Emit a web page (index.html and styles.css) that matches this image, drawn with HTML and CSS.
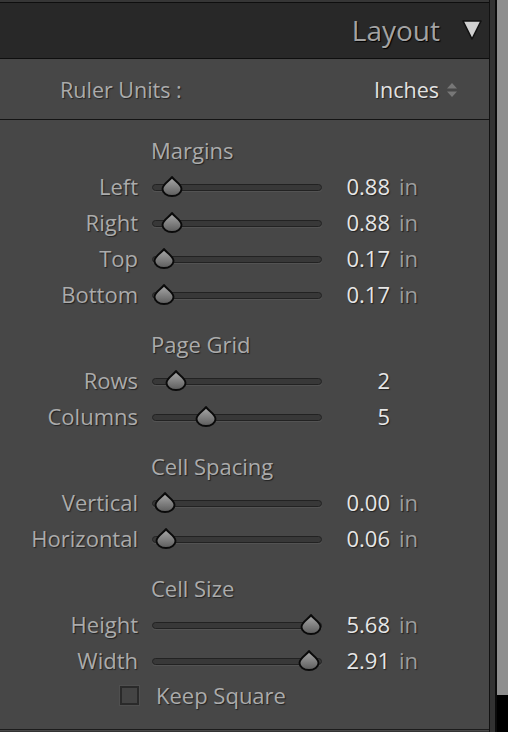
FILE: index.html
```html
<!DOCTYPE html>
<html>
<head>
<meta charset="utf-8">
<link rel="stylesheet" href="styles.css">
</head>
<body>
<div class="frame">
  <div class="panel">
    <div class="topstrip"></div>
    <div class="header">
      <span class="title">Layout</span>
      <svg class="tri" width="22" height="22" viewBox="0 0 22 22"><path d="M2 2 L20 2 L11 20 Z" fill="#cfcfcf" stroke="#111" stroke-width="1.6" stroke-linejoin="round"/></svg>
    </div>
    <div class="ruler">
      <span class="rlabel">Ruler Units :</span>
      <span class="rvalue">Inches</span>
      <svg class="spin" width="12" height="16" viewBox="0 0 12 16"><path d="M1 6.5 L6 1 L11 6.5 Z" fill="#777"/><path d="M1 9.5 L6 15 L11 9.5 Z" fill="#777"/></svg>
    </div>
    <div class="body">
      <div class="section">
        <div class="heading">Margins</div>
        <div class="row"><span class="label">Left</span><span class="slider"><span class="track"></span><svg class="knob" style="left:9px" width="22" height="21" viewBox="0 0 22 21"><use href="#knob"/></svg></span><span class="value">0.88</span><span class="unit">in</span></div>
        <div class="row"><span class="label">Right</span><span class="slider"><span class="track"></span><svg class="knob" style="left:9px" width="22" height="21" viewBox="0 0 22 21"><use href="#knob"/></svg></span><span class="value">0.88</span><span class="unit">in</span></div>
        <div class="row"><span class="label">Top</span><span class="slider"><span class="track"></span><svg class="knob" style="left:1px" width="22" height="21" viewBox="0 0 22 21"><use href="#knob"/></svg></span><span class="value">0.17</span><span class="unit">in</span></div>
        <div class="row"><span class="label">Bottom</span><span class="slider"><span class="track"></span><svg class="knob" style="left:1px" width="22" height="21" viewBox="0 0 22 21"><use href="#knob"/></svg></span><span class="value">0.17</span><span class="unit">in</span></div>
      </div>
      <div class="section">
        <div class="heading">Page Grid</div>
        <div class="row"><span class="label">Rows</span><span class="slider"><span class="track"></span><svg class="knob" style="left:13px" width="22" height="21" viewBox="0 0 22 21"><use href="#knob"/></svg></span><span class="value">2</span><span class="unit"></span></div>
        <div class="row"><span class="label">Columns</span><span class="slider"><span class="track"></span><svg class="knob" style="left:43px" width="22" height="21" viewBox="0 0 22 21"><use href="#knob"/></svg></span><span class="value">5</span><span class="unit"></span></div>
      </div>
      <div class="section">
        <div class="heading">Cell Spacing</div>
        <div class="row"><span class="label">Vertical</span><span class="slider"><span class="track"></span><svg class="knob" style="left:2px" width="22" height="21" viewBox="0 0 22 21"><use href="#knob"/></svg></span><span class="value">0.00</span><span class="unit">in</span></div>
        <div class="row"><span class="label">Horizontal</span><span class="slider"><span class="track"></span><svg class="knob" style="left:3px" width="22" height="21" viewBox="0 0 22 21"><use href="#knob"/></svg></span><span class="value">0.06</span><span class="unit">in</span></div>
      </div>
      <div class="section">
        <div class="heading">Cell Size</div>
        <div class="row"><span class="label">Height</span><span class="slider"><span class="track"></span><svg class="knob" style="left:148px" width="22" height="21" viewBox="0 0 22 21"><use href="#knob"/></svg></span><span class="value">5.68</span><span class="unit">in</span></div>
        <div class="row"><span class="label">Width</span><span class="slider"><span class="track"></span><svg class="knob" style="left:146px" width="22" height="21" viewBox="0 0 22 21"><use href="#knob"/></svg></span><span class="value">2.91</span><span class="unit">in</span></div>
        <div class="check"><span class="box"></span><span class="clabel">Keep Square</span></div>
      </div>
    </div>
  </div>
  <div class="gutter"></div>
  <div class="scroll"><div class="sthumb"></div></div>
</div>
<svg width="0" height="0" class="defs">
  <defs>
    <linearGradient id="kg" x1="0" y1="0" x2="0" y2="1">
      <stop offset="0" stop-color="#aaaaaa"/>
      <stop offset="1" stop-color="#5c5c5c"/>
    </linearGradient>
    <g id="knob"><path d="M11 1 C9.5 4 1.5 8 1.5 13 A9.5 7 0 0 0 20.5 13 C20.5 8 12.5 4 11 1 Z" fill="url(#kg)" stroke="#0a0a0a" stroke-width="1.9" stroke-linejoin="round"/></g>
  </defs>
</svg>
</body>
</html>
```

FILE: styles.css
```css
html, body {
  margin: 0;
  padding: 0;
  background: #000;
}
body {
  font-family: "Open Sans", "Noto Sans", sans-serif;
}
.defs {
  position: absolute;
  width: 0;
  height: 0;
}
.frame {
  width: 508px;
  height: 732px;
  display: flex;
  overflow: hidden;
  background: #000;
}
.panel {
  width: 490px;
  flex: none;
  box-sizing: border-box;
  display: flex;
  flex-direction: column;
  border-right: 1px solid #121212;
  background: #333;
}
.topstrip {
  height: 2px;
  background: #363636;
  border-bottom: 1px solid #0e0e0e;
}
.header {
  height: 55px;
  background: #282828;
  border-bottom: 1px solid #0e0e0e;
  display: flex;
  align-items: center;
  justify-content: flex-end;
  padding-right: 6px;
}
.title {
  font-size: 28px;
  color: #a3a3a3;
  text-shadow: 1px 1px 1px #000;
  margin-right: 21px;
  margin-top: -1px;
}
.tri {
  display: block;
  margin-top: -1px;
}
.ruler {
  height: 60px;
  background: #474747;
  border-bottom: 1px solid #141414;
  display: flex;
  align-items: center;
  padding-left: 60px;
  padding-right: 31px;
}
.rlabel {
  font-size: 21.5px;
  color: #ababab;
  text-shadow: 1px 1px 1px #222;
  flex: 1;
}
.rvalue {
  font-size: 21.5px;
  color: #e2e2e2;
  text-shadow: 1px 1px 1px #222;
  margin-right: 7px;
}
.spin {
  display: block;
  margin-top: 2px;
}
.body {
  flex: 1;
  background: #474747;
  padding-top: 12px;
  border-bottom: 1px solid #1c1c1c;
  margin-bottom: 2px;
  box-shadow: 0 1px 0 #474747;
}
.section {
  margin-bottom: 14px;
}
.heading {
  height: 36px;
  line-height: 36px;
  padding-left: 151px;
  font-size: 22px;
  color: #ababab;
  text-shadow: 1px 1px 1px #222;
}
.row {
  height: 36px;
  display: grid;
  grid-template-columns: 138px 184px 68px auto;
  align-items: center;
  font-size: 22px;
}
.label {
  grid-column: 1;
  justify-self: end;
  color: #ababab;
  text-shadow: 1px 1px 1px #222;
  white-space: nowrap;
}
.slider {
  grid-column: 2;
  position: relative;
  height: 36px;
  margin-left: 14px;
  width: 170px;
}
.track {
  position: absolute;
  left: 0;
  right: 0;
  top: 16px;
  height: 7px;
  border-radius: 4px;
  background: #383838;
  border: 1px solid #222;
  box-sizing: border-box;
  box-shadow: 0 1px 0 #535353;
}
.knob {
  position: absolute;
  top: 8px;
  display: block;
}
.value {
  grid-column: 3;
  text-align: right;
  color: #e6e6e6;
  text-shadow: 1px 1px 1px #222;
}
.unit {
  grid-column: 4;
  padding-left: 9px;
  color: #9c9c9c;
  text-shadow: 1px 1px 1px #222;
}
.check {
  height: 36px;
  display: flex;
  align-items: center;
  padding-left: 120px;
  margin-top: -1px;
}
.box {
  width: 15px;
  height: 15px;
  border: 2px solid #2a2a2a;
  background: #444;
  box-shadow: 0 0 0 1px #4f4f4f;
  margin-right: 17px;
}
.clabel {
  font-size: 22px;
  color: #ababab;
  text-shadow: 1px 1px 1px #222;
}
.gutter {
  width: 7px;
  flex: none;
  box-sizing: border-box;
  background: #333;
  border-right: 2px solid #0c0c0c;
}
.scroll {
  width: 11px;
  flex: none;
  background: #000;
}
.sthumb {
  width: 11px;
  height: 695px;
  background: #8e8e8e;
}
```
